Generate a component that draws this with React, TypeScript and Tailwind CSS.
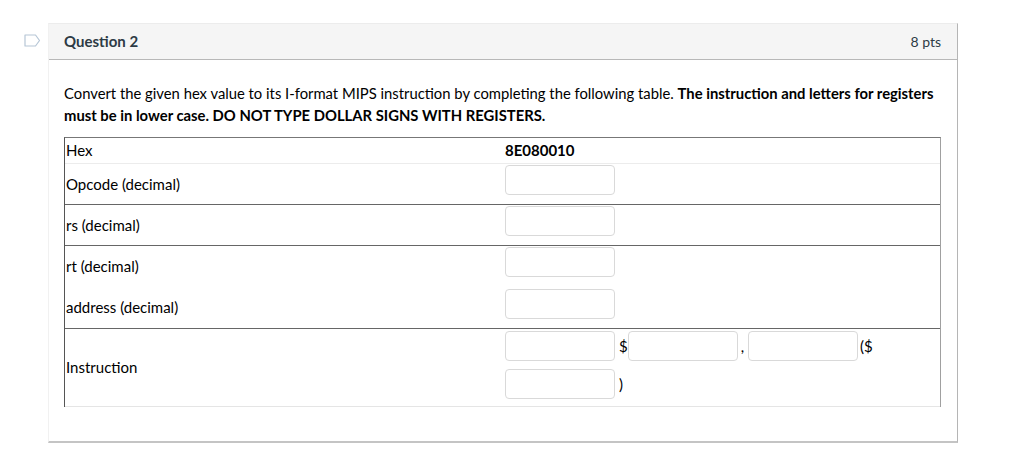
import type { ReactNode } from "react";

const Field = ({ className = "" }: { className?: string }) => (
  <input
    type="text"
    className={`h-[30px] w-[110px] shrink-0 rounded-[4px] border border-[#d9d9d9] bg-white align-middle outline-none ${className}`}
  />
);

type RowProps = {
  label: string;
  children: ReactNode;
  className?: string;
};

const Row = ({ label, children, className = "" }: RowProps) => (
  <div className={`grid grid-cols-[440px_1fr] ${className}`}>
    <div className="flex items-center pl-px">{label}</div>
    <div>{children}</div>
  </div>
);

export default function App() {
  return (
    <div className="relative h-[456px] w-[1024px] bg-white text-[15px] text-black" style={{ fontFamily: "Lato, 'Noto Sans', sans-serif" }}>
      <div className="flex pl-6 pt-[23px]">
        <div className="mr-2 mt-[11px] w-[16px] shrink-0">
          <svg width="17" height="13" viewBox="0 0 17 13" fill="none">
            <path d="M1 1 H11.5 L15.5 6.5 L11.5 12 H1 Z" stroke="#b6c6d6" strokeWidth="1.2" strokeLinejoin="round" />
          </svg>
        </div>

        <div className="h-[420px] w-[910px] border-t border-l border-t-[#ececec] border-l-[#f1f1f1] border-r border-b-2 border-r-[#b5b5b5] border-b-[#c4c4c4]">
          <div className="flex h-[36px] items-center justify-between border-b border-[#b8b8b8] bg-[#f5f5f5] pl-[15px] pr-4 text-[#2d3b45]">
            <h2 className="text-[15px] font-bold">Question 2</h2>
            <span className="text-[14px]">8 pts</span>
          </div>

          <div className="pl-[15px] pr-4 pt-[22px]">
            <p className="text-[14.8px] leading-[22px]">
              Convert the given hex value to its I-format MIPS instruction by completing the following table.{" "}
              <strong>The instruction and letters for registers must be in lower case. DO NOT TYPE DOLLAR SIGNS WITH REGISTERS.</strong>
            </p>

            <div className="mt-[11px] border-t border-l border-r border-t-[#777] border-l-[#555] border-r-[#a0a0a0]">
              <Row label="Hex" className="h-[26px] border-b border-[#ececec]">
                <div className="flex h-full items-center font-bold">8E080010</div>
              </Row>
              <Row label="Opcode (decimal)" className="h-[41px] border-b border-[#666]">
                <div className="pt-[1px]">
                  <Field />
                </div>
              </Row>
              <Row label="rs (decimal)" className="h-[41px] border-b border-[#666]">
                <div className="pt-[1px]">
                  <Field />
                </div>
              </Row>
              <Row label="rt (decimal)" className="h-[41px]">
                <div className="pt-[1px]">
                  <Field />
                </div>
              </Row>
              <Row label="address (decimal)" className="h-[42px] border-b border-[#666]">
                <div className="pt-[2px]">
                  <Field />
                </div>
              </Row>
              <Row label="Instruction" className="h-[78px] border-b border-[#e5e5e5]">
                <div className="pt-[2px] leading-[30px]">
                  <div className="flex items-center">
                    <Field />
                    <span className="ml-[4px]">$</span>
                    <Field />
                    <span className="ml-[3px] mr-[4px]">,</span>
                    <Field />
                    <span className="ml-[2px]">($</span>
                  </div>
                  <div className="mt-[8px] flex items-center">
                    <Field />
                    <span className="ml-[4px]">)</span>
                  </div>
                </div>
              </Row>
            </div>
          </div>
        </div>
      </div>
    </div>
  );
}
